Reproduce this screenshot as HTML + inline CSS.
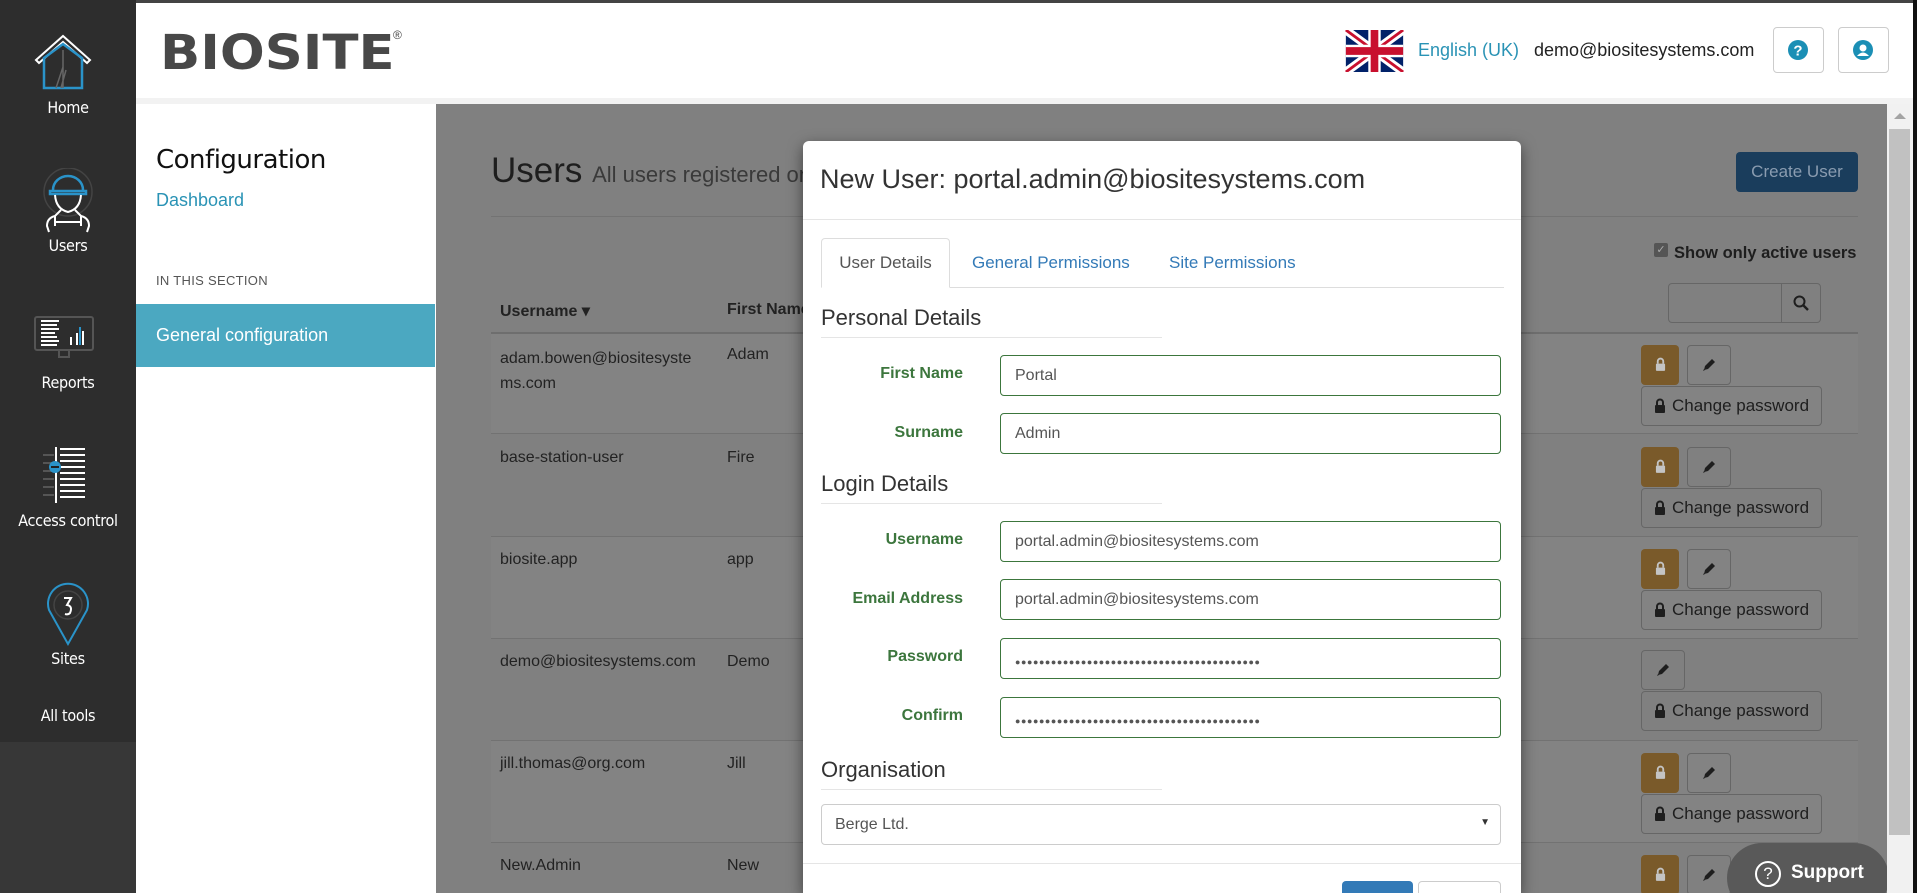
<!DOCTYPE html>
<html><head><meta charset="utf-8"><style>
*{box-sizing:border-box;margin:0;padding:0}
html{width:1917px;height:893px;overflow:hidden}
body{width:1917px;height:893px;overflow:hidden;position:relative;background:#fff;font-family:"Liberation Sans",Arial,sans-serif}
.a{position:absolute}
.nav{left:0;top:0;width:136px;height:742px;background:#2d2d2d}
.navb{left:0;top:742px;width:136px;height:151px;background:#373737}
.nl{width:136px;text-align:center;color:#fff;font-size:16px;font-family:"DejaVu Sans Condensed","Liberation Sans Narrow","Liberation Sans",sans-serif;letter-spacing:-0.3px}
.ov{left:436px;top:104px;width:1451px;height:789px;background:#808080;overflow:hidden}
.t{color:#222;font-size:16px}
.hl{height:2px;background:#6e6e6e}
.btn{border:1px solid #666;border-radius:4px}
.lock{background:#7a5a2a;border-radius:4px}
.inp{left:197px;width:501px;height:41px;border:1px solid #3c763d;border-radius:4px;font-size:16px;color:#555;padding:11px 14px;line-height:18px}
.lab{width:160px;text-align:right;color:#3c763d;font-weight:bold;font-size:16px;left:0}
.sec{left:18px;font-size:22px;color:#333;width:341px;border-bottom:1px solid #e5e5e5;padding-bottom:6px}
.cp{width:181px;height:40px;font-size:17px;color:#1e1e1e;line-height:38px;padding-left:30px}
.pen{width:44px;height:40px}
.pw{font-size:9px;letter-spacing:0.55px;padding-top:14px!important}
</style></head><body>
<div class="a" style="left:0;top:0;width:1917px;height:3px;background:#444"></div>
<div class="a nav"></div><div class="a navb"></div>
<svg class="a" style="left:33px;top:32px" width="60" height="60" viewBox="0 0 60 60" fill="none">
<path d="M3 28 L30 4 L57 28 L54 31 L30 10 L6 31 Z" stroke="#fff" stroke-width="2"/>
<path d="M11 56 V26 L30 12 L49 26 V56 Z" stroke="#2a93c9" stroke-width="2.5"/>
<path d="M23 56 L30 35 M28 56 L33 38 M30 18 V56" stroke="#666" stroke-width="1.5"/>
</svg>
<div class="a nl" style="top:98px">Home</div>
<svg class="a" style="left:35px;top:168px" width="66" height="66" viewBox="0 0 66 66" fill="none">
<circle cx="33" cy="24" r="24" stroke="#444" stroke-width="1.5"/>
<path d="M18 22 a15 14 0 0 1 30 0 M15 23 H51 V26 H15Z" stroke="#2a93c9" stroke-width="2.5"/>
<path d="M20 27 q1 14 13 17 q12 -3 13 -17 M26 42 L20 48 q-8 2 -8 10 l2 6 M40 42 L46 48 q8 2 8 10 l-2 6 M20 48 V58 M46 48 V58 M20 54 H46" stroke="#fff" stroke-width="2"/>
</svg>
<div class="a nl" style="top:236px">Users</div>
<svg class="a" style="left:33px;top:305px" width="62" height="62" viewBox="0 0 62 62" fill="none">
<rect x="2" y="12" width="58" height="33" rx="2" stroke="#555" stroke-width="2"/>
<path d="M8 16 H26 M8 20 H24 M8 24 H26 M8 28 H22 M8 32 H24 M8 36 H26 M8 40 H24" stroke="#fff" stroke-width="2"/>
<path d="M38 40 V32 M44 40 V28 M50 40 V26" stroke="#fff" stroke-width="2"/><path d="M47 40 V22" stroke="#2a93c9" stroke-width="2"/>
<path d="M26 45 V52 H36 V45" stroke="#555" stroke-width="2"/>
</svg>
<div class="a nl" style="top:373px">Reports</div>
<svg class="a" style="left:40px;top:445px" width="50" height="60" viewBox="0 0 50 60" fill="none">
<path d="M20 4 H45 M20 10 H45 M20 16 H45 M20 22 H45 M20 28 H45 M20 34 H45 M20 40 H45 M20 46 H45 M20 52 H45" stroke="#fff" stroke-width="2"/>
<path d="M16 2 V58" stroke="#fff" stroke-width="2"/>
<path d="M3 10 H14 M3 18 H14 M3 26 H14 M3 34 H14 M3 42 H14 M3 50 H14" stroke="#555" stroke-width="2"/>
<circle cx="15" cy="22" r="6" fill="#2a93c9"/><rect x="11" y="21" width="8" height="2" fill="#222"/>
</svg>
<div class="a nl" style="top:511px">Access control</div>
<svg class="a" style="left:37px;top:578px" width="62" height="70" viewBox="0 0 62 70" fill="none">
<path d="M31 66 L12 32 a20 20 0 1 1 38 0 Z" stroke="#2a93c9" stroke-width="2"/>
<circle cx="31" cy="27" r="14" stroke="#444" stroke-width="1.5"/>
<path d="M27 20 H34 L30 27 q6 1 3 8 q-2 2 -5 1" stroke="#fff" stroke-width="2"/>
</svg>
<div class="a nl" style="top:649px">Sites</div>
<div class="a nl" style="top:706px">All tools</div>

<!-- header -->
<div class="a" style="left:136px;top:98px;width:1781px;height:6px;background:#f2f2f2"></div>
<div class="a" style="left:160px;top:25px;font-family:'DejaVu Sans','Liberation Sans',sans-serif;font-weight:bold;font-size:48px;color:#484848;letter-spacing:0px;transform:scaleX(1.1);transform-origin:left">BIOSITE</div>
<div class="a" style="left:393px;top:28px;font-size:12px;color:#484848">®</div>
<svg class="a" style="left:1345px;top:30px" width="59" height="42" viewBox="0 0 60 44">
<rect width="60" height="44" rx="3" fill="#012169"/>
<path d="M0 0 L60 44 M60 0 L0 44" stroke="#fff" stroke-width="9"/>
<path d="M0 0 L60 44 M60 0 L0 44" stroke="#c8102e" stroke-width="3"/>
<path d="M30 0 V44 M0 22 H60" stroke="#fff" stroke-width="13"/>
<path d="M30 0 V44 M0 22 H60" stroke="#c8102e" stroke-width="8"/>
</svg>
<div class="a" style="left:1418px;top:40px;font-size:18px;color:#2a93b5">English (UK)</div>
<div class="a" style="left:1534px;top:40px;font-size:18px;color:#222">demo@biositesystems.com</div>
<div class="a" style="left:1773px;top:27px;width:51px;height:46px;border:1px solid #ccc;border-radius:4px"></div>
<svg class="a" style="left:1788px;top:40px" width="20" height="20" viewBox="0 0 20 20"><circle cx="10" cy="10" r="10" fill="#1b8fb5"/><text x="10" y="15.5" text-anchor="middle" font-family="Liberation Sans" font-weight="bold" font-size="15" fill="#fff">?</text></svg>
<div class="a" style="left:1838px;top:27px;width:51px;height:46px;border:1px solid #ccc;border-radius:4px"></div>
<svg class="a" style="left:1853px;top:40px" width="20" height="20" viewBox="0 0 20 20"><circle cx="10" cy="10" r="10" fill="#1b8fb5"/><circle cx="10" cy="8" r="3.5" fill="#fff"/><path d="M4 16 q6 -7 12 0" fill="#fff"/></svg>

<!-- sidebar -->
<div class="a" style="left:156px;top:145px;font-size:26px;color:#111;font-family:'DejaVu Sans','Liberation Sans',sans-serif;letter-spacing:-0.5px">Configuration</div>
<div class="a" style="left:156px;top:190px;font-size:18px;color:#2a93b5">Dashboard</div>
<div class="a" style="left:156px;top:273px;font-size:13px;color:#555;letter-spacing:0.3px">IN THIS SECTION</div>
<div class="a" style="left:136px;top:304px;width:299px;height:63px;background:#4ba8c1"></div>
<div class="a" style="left:156px;top:325px;font-size:18px;color:#fff">General configuration</div>

<!-- overlay content -->
<div class="a ov">
 <div class="a" style="left:55px;top:47px;font-size:35px;color:#1e1e1e">Users <span style="font-size:22px;color:#3a3a3a">All users registered on</span></div>
 <div class="a" style="left:1300px;top:48px;width:122px;height:40px;background:#1a3d5c;border-radius:4px;color:#8a9cb0;font-size:17px;text-align:center;line-height:40px">Create User</div>
 <div class="a" style="left:55px;top:112px;width:1367px;height:1px;background:#737373"></div>
 <div class="a" style="left:1218px;top:139px;width:14px;height:14px;background:#555;border-radius:2px;color:#aaa;font-size:11px;line-height:14px;text-align:center">✓</div>
 <div class="a" style="left:1238px;top:140px;font-size:16.5px;font-weight:bold;color:#1e1e1e">Show only active users</div>
 <div class="a" style="left:1232px;top:179px;width:153px;height:40px;border:1px solid #666;border-radius:4px"></div>
 <div class="a" style="left:1345px;top:179px;width:1px;height:40px;background:#666"></div>
 <svg class="a" style="left:1357px;top:191px" width="16" height="16" viewBox="0 0 16 16" fill="none"><circle cx="6.5" cy="6.5" r="5" stroke="#1e1e1e" stroke-width="2"/><path d="M10 10 L15 15" stroke="#1e1e1e" stroke-width="2.4"/></svg>
 <div class="a t" style="left:64px;top:197px;font-weight:bold">Username ▾</div>
 <div class="a t" style="left:291px;top:197px;font-weight:bold">First Name</div>
 <div class="a hl" style="left:55px;top:228px;width:1367px"></div>
 <div class="a" style="left:55px;top:230px;width:1367px;height:99px;background:#838383"></div>
 <div class="a t" style="left:64px;top:242px;line-height:25px">adam.bowen@biositesyste<br>ms.com</div><div class="a t" style="left:291px;top:242px">Adam</div>
 <div class="a" style="left:55px;top:329px;width:1367px;height:1px;background:#727272"></div>
 <div class="a t" style="left:64px;top:345px">base-station-user</div><div class="a t" style="left:291px;top:345px">Fire</div>
 <div class="a" style="left:55px;top:432px;width:1367px;height:1px;background:#727272"></div>
 <div class="a" style="left:55px;top:433px;width:1367px;height:101px;background:#838383"></div>
 <div class="a t" style="left:64px;top:447px">biosite.app</div><div class="a t" style="left:291px;top:447px">app</div>
 <div class="a" style="left:55px;top:534px;width:1367px;height:1px;background:#727272"></div>
 <div class="a t" style="left:64px;top:549px">demo@biositesystems.com</div><div class="a t" style="left:291px;top:549px">Demo</div>
 <div class="a" style="left:55px;top:636px;width:1367px;height:1px;background:#727272"></div>
 <div class="a" style="left:55px;top:637px;width:1367px;height:101px;background:#838383"></div>
 <div class="a t" style="left:64px;top:651px">jill.thomas@org.com</div><div class="a t" style="left:291px;top:651px">Jill</div>
 <div class="a" style="left:55px;top:738px;width:1367px;height:1px;background:#727272"></div>
 <div class="a t" style="left:64px;top:753px">New.Admin</div><div class="a t" style="left:291px;top:753px">New</div>
</div>
<svg width="0" height="0" style="position:absolute"><defs>
<symbol id="lk" viewBox="0 0 12 16"><path d="M3 7 V4.5 a3 3 0 0 1 6 0 V7" fill="none" stroke="currentColor" stroke-width="2"/><rect x="1" y="7" width="10" height="8" rx="1" fill="currentColor"/></symbol>
<symbol id="pn" viewBox="0 0 16 16"><path d="M3 13 L4 9 L11 2 L14 5 L7 12 Z" fill="#1e1e1e"/><path d="M2 14 L3 12 L4 13 Z" fill="#1e1e1e"/></symbol>
</defs></svg>
<div class="a lock" style="left:1641px;top:345px;width:38px;height:40px"></div>
<div class="a btn pen" style="left:1687px;top:345px"></div>
<div class="a btn cp" style="left:1641px;top:386px">Change password</div>
<div class="a lock" style="left:1641px;top:447px;width:38px;height:40px"></div>
<div class="a btn pen" style="left:1687px;top:447px"></div>
<div class="a btn cp" style="left:1641px;top:488px">Change password</div>
<div class="a lock" style="left:1641px;top:549px;width:38px;height:40px"></div>
<div class="a btn pen" style="left:1687px;top:549px"></div>
<div class="a btn cp" style="left:1641px;top:590px">Change password</div>
<div class="a btn pen" style="left:1641px;top:650px"></div>
<div class="a btn cp" style="left:1641px;top:691px">Change password</div>
<div class="a lock" style="left:1641px;top:753px;width:38px;height:40px"></div>
<div class="a btn pen" style="left:1687px;top:753px"></div>
<div class="a btn cp" style="left:1641px;top:794px">Change password</div>
<div class="a lock" style="left:1641px;top:855px;width:38px;height:40px"></div>
<div class="a btn pen" style="left:1687px;top:855px"></div>
<svg class="a" style="left:1655px;top:357px;color:#c4c4c4" width="11" height="15"><use href="#lk"/></svg>
<svg class="a" style="left:1655px;top:459px;color:#c4c4c4" width="11" height="15"><use href="#lk"/></svg>
<svg class="a" style="left:1655px;top:561px;color:#c4c4c4" width="11" height="15"><use href="#lk"/></svg>
<svg class="a" style="left:1655px;top:765px;color:#c4c4c4" width="11" height="15"><use href="#lk"/></svg>
<svg class="a" style="left:1655px;top:867px;color:#c4c4c4" width="11" height="15"><use href="#lk"/></svg>
<svg class="a" style="left:1701px;top:357px" width="16" height="16"><use href="#pn"/></svg>
<svg class="a" style="left:1701px;top:459px" width="16" height="16"><use href="#pn"/></svg>
<svg class="a" style="left:1701px;top:561px" width="16" height="16"><use href="#pn"/></svg>
<svg class="a" style="left:1655px;top:662px" width="16" height="16"><use href="#pn"/></svg>
<svg class="a" style="left:1701px;top:765px" width="16" height="16"><use href="#pn"/></svg>
<svg class="a" style="left:1701px;top:867px" width="16" height="16"><use href="#pn"/></svg>
<svg class="a" style="left:1654px;top:398px;color:#1e1e1e" width="12" height="16"><use href="#lk"/></svg>
<svg class="a" style="left:1654px;top:500px;color:#1e1e1e" width="12" height="16"><use href="#lk"/></svg>
<svg class="a" style="left:1654px;top:602px;color:#1e1e1e" width="12" height="16"><use href="#lk"/></svg>
<svg class="a" style="left:1654px;top:703px;color:#1e1e1e" width="12" height="16"><use href="#lk"/></svg>
<svg class="a" style="left:1654px;top:806px;color:#1e1e1e" width="12" height="16"><use href="#lk"/></svg>
<!-- support -->
<div class="a" style="left:1727px;top:843px;width:162px;height:70px;border-radius:35px;background:#595959"></div>
<div class="a" style="left:1755px;top:861px;width:26px;height:26px;border:2px solid #fff;border-radius:50%;color:#fff;font-size:17px;text-align:center;line-height:22px">?</div>
<div class="a" style="left:1791px;top:862px;color:#fff;font-size:19px;font-weight:bold">Support</div>
<!-- scrollbar -->
<div class="a" style="left:1887px;top:104px;width:26px;height:789px;background:#f1f1f1"></div>
<div class="a" style="left:1889px;top:129px;width:21px;height:706px;background:#c1c1c1"></div>
<div class="a" style="left:1894px;top:113px;width:0;height:0;border-left:6px solid transparent;border-right:6px solid transparent;border-bottom:6px solid #a3a3a3"></div>
<div class="a" style="left:1913px;top:0;width:4px;height:893px;background:#111"></div>

<!-- modal -->
<div class="a" style="left:803px;top:141px;width:718px;height:752px;background:#fff;border-radius:6px 6px 0 0;box-shadow:0 5px 15px rgba(0,0,0,.5)">
 <div class="a" style="left:17px;top:23px;font-size:27px;color:#333">New User: portal.admin@biositesystems.com</div>
 <div class="a" style="left:0;top:78px;width:718px;height:1px;background:#e5e5e5"></div>
 <div class="a" style="left:18px;top:146px;width:683px;height:1px;background:#ddd"></div>
 <div class="a" style="left:18px;top:97px;width:129px;height:50px;border:1px solid #ddd;border-bottom:1px solid #fff;border-radius:4px 4px 0 0;background:#fff;font-size:17px;color:#555;text-align:center;line-height:48px">User Details</div>
 <div class="a" style="left:169px;top:112px;font-size:17px;color:#337ab7">General Permissions</div>
 <div class="a" style="left:366px;top:112px;font-size:17px;color:#337ab7">Site Permissions</div>
 <div class="a sec" style="top:164px">Personal Details</div>
 <div class="a lab" style="top:224px">First Name</div>
 <div class="a inp" style="top:214px">Portal</div>
 <div class="a lab" style="top:283px">Surname</div>
 <div class="a inp" style="top:272px">Admin</div>
 <div class="a sec" style="top:330px">Login Details</div>
 <div class="a lab" style="top:390px">Username</div>
 <div class="a inp" style="top:380px">portal.admin@biositesystems.com</div>
 <div class="a lab" style="top:449px">Email Address</div>
 <div class="a inp" style="top:438px">portal.admin@biositesystems.com</div>
 <div class="a lab" style="top:507px">Password</div>
 <div class="a inp pw" style="top:497px">●●●●●●●●●●●●●●●●●●●●●●●●●●●●●●●●●●●●●●●●●</div>
 <div class="a lab" style="top:566px">Confirm</div>
 <div class="a inp pw" style="top:556px">●●●●●●●●●●●●●●●●●●●●●●●●●●●●●●●●●●●●●●●●●</div>
 <div class="a sec" style="top:616px">Organisation</div>
 <div class="a" style="left:18px;top:663px;width:680px;height:41px;border:1px solid #ccc;border-radius:4px;font-size:16px;color:#555;padding:11px 13px">Berge Ltd.<span style="position:absolute;right:10px;top:12px;font-size:10px;color:#333">▼</span></div>
 <div class="a" style="left:0;top:722px;width:718px;height:1px;background:#e5e5e5"></div>
 <div class="a" style="left:539px;top:740px;width:71px;height:40px;background:#337ab7;border-radius:4px"></div>
 <div class="a" style="left:615px;top:740px;width:83px;height:40px;border:1px solid #ccc;border-radius:4px"></div>
</div>
</body></html>
